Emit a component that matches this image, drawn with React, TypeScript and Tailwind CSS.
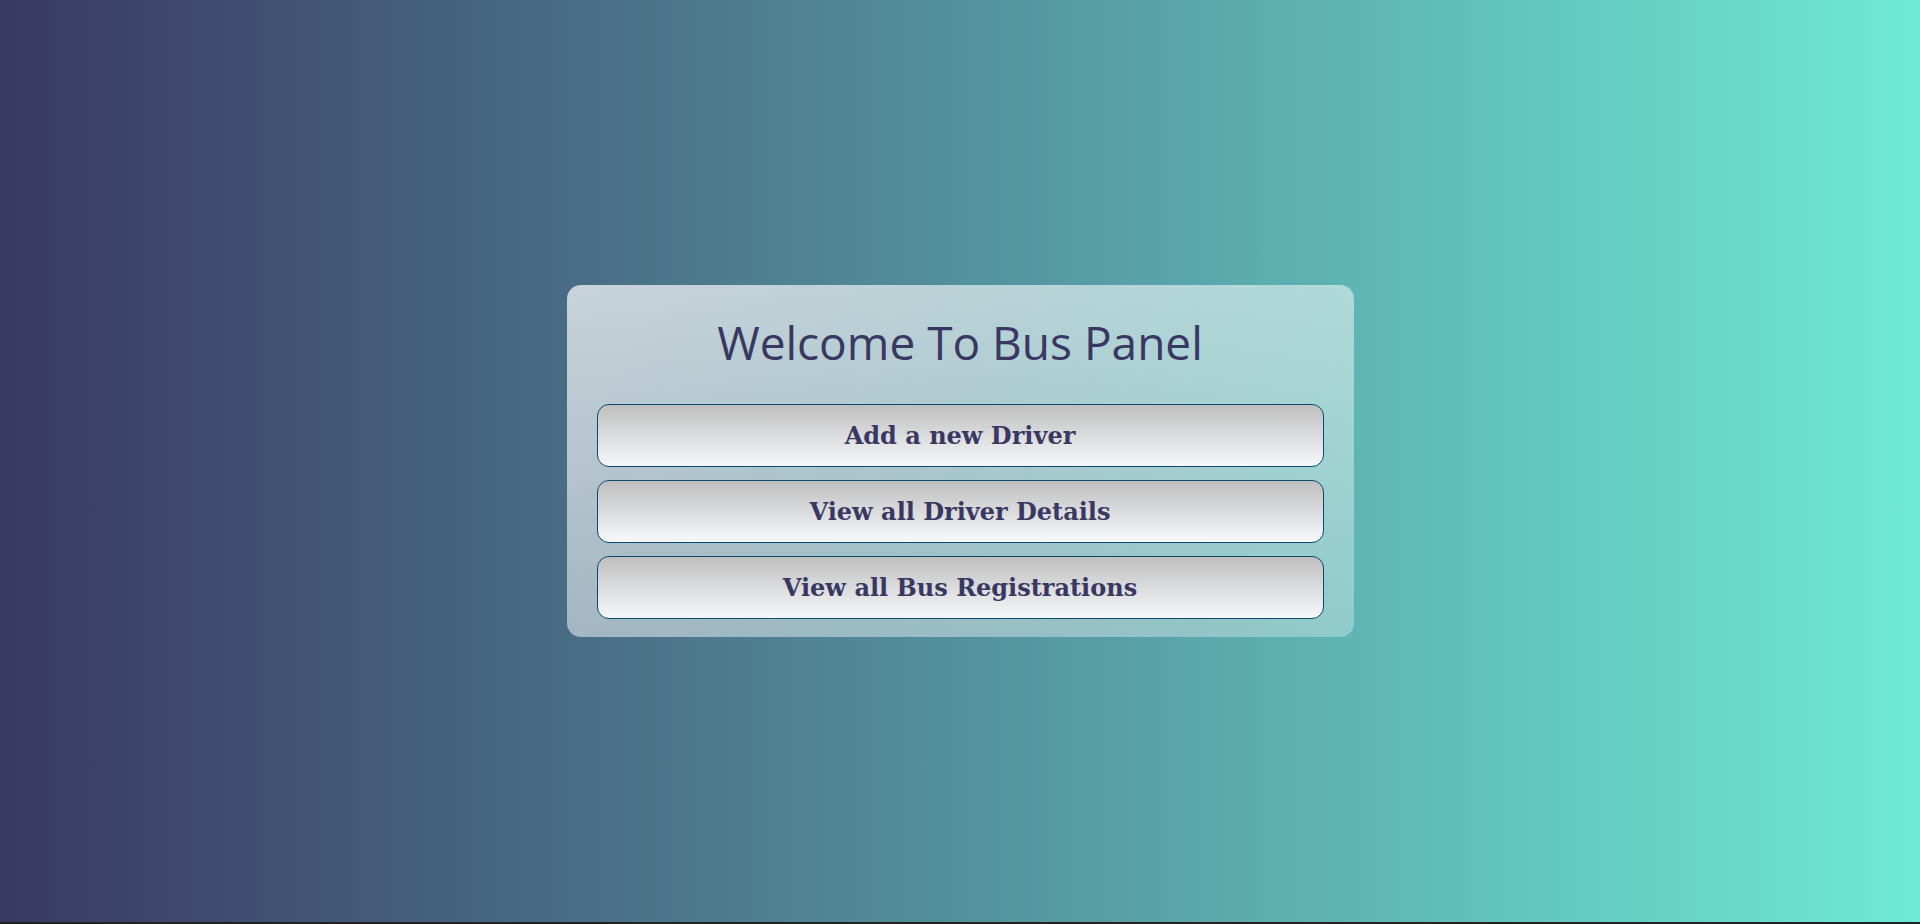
const actions = [
  "Add a new Driver",
  "View all Driver Details",
  "View all Bus Registrations",
];

export default function App() {
  return (
    <div className="flex h-[924px] flex-col bg-[#222]">
      <main className="flex h-[922px] items-center justify-center bg-[linear-gradient(to_right,#393862,#6eead6)]">
        <section className="flex w-[787px] flex-col rounded-[14px] bg-[linear-gradient(to_bottom_right,rgba(255,255,255,0.7),rgba(255,255,255,0.3))] px-[30px] pb-[18px] pt-[22px]">
          <h1 className="mb-[27px] text-center font-['Open_Sans',sans-serif] text-[46px] leading-[70px] text-[#393862]">
            Welcome To Bus Panel
          </h1>
          <div className="flex flex-col gap-[13px]">
            {actions.map((label) => (
              <button
                key={label}
                className="h-[63px] rounded-[12px] border border-[#0b4a6f] bg-[linear-gradient(to_bottom,#bfbfbf,#f6f8fb)] font-['DejaVu_Serif',serif] text-[24px] font-bold text-[#393862]"
              >
                {label}
              </button>
            ))}
          </div>
        </section>
      </main>
    </div>
  );
}
